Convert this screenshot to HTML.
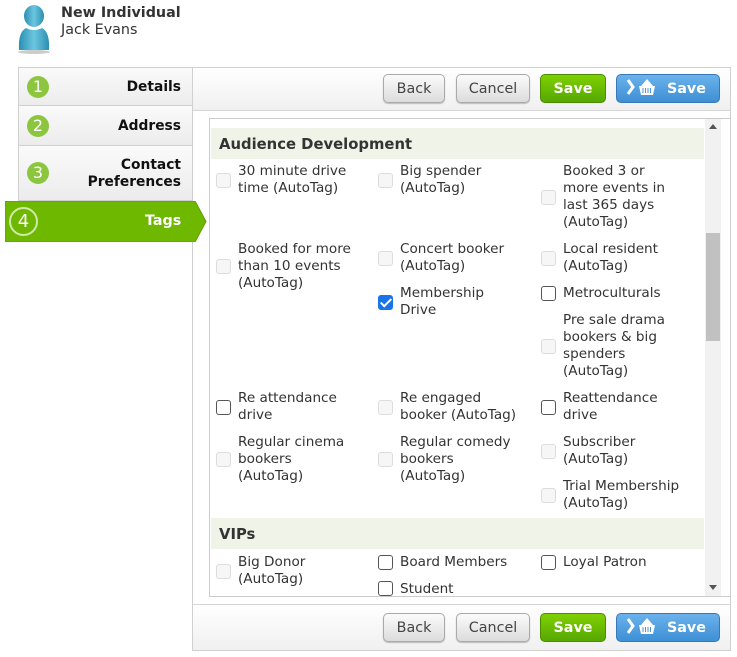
<!DOCTYPE html>
<html><head><meta charset="utf-8"><style>
*{box-sizing:border-box;margin:0;padding:0}
body{width:737px;height:657px;background:#fff;font-family:"DejaVu Sans",Verdana,sans-serif;font-size:13px;color:#333;position:relative;overflow:hidden}
.abs{position:absolute}
.nav{position:absolute;left:18px;width:175px;background:linear-gradient(#fafafa,#ececec);border:1px solid #d0d0d0;border-top:none;font-weight:bold;color:#111;font-size:13.8px;text-align:right;padding-right:11px;padding-top:2px;display:flex;align-items:center;justify-content:flex-end;line-height:17px}
.circ{position:absolute;left:8px;width:22px;height:22px;border-radius:50%;background:#8cc63f;color:#fff;font-weight:normal;font-size:16px;text-align:center;line-height:22px}
.btn{position:absolute;height:29px;border-radius:5px;font-size:14.3px;text-align:center;line-height:28px}
.g{background:linear-gradient(#fbfbfb,#dcdcdc);border:1px solid #aaa;color:#444;box-shadow:0 1px 1px #bbb}
.gr{background:linear-gradient(#7fd000,#56a800);border:1px solid #4a8d00;color:#fff;font-weight:bold}
.bl{background:linear-gradient(#6ab2ec,#3e8fd5);border:1px solid #3779b8;color:#fff;font-weight:bold}
.it{position:absolute;display:flex;align-items:center;line-height:17px;font-size:13.6px;color:#333}
.cb{width:15px;height:15px;border:1px solid #555;border-radius:3px;margin-right:7px;flex:none;background:#fff}
.cb.d{border-color:#ddd;background:#f6f6f6}
.cb.c{background:#1a73e8;border-color:#1a73e8;position:relative}
.cb.c:after{content:"";position:absolute;left:4px;top:0px;width:4px;height:9px;border:solid #fff;border-width:0 2px 2px 0;transform:rotate(45deg)}
.hd{position:absolute;left:211px;width:493px;height:31px;background:#f0f3e8;font-weight:bold;font-size:14.8px;color:#333;padding-left:8px;line-height:33px}
</style></head><body>
<svg class="abs" style="left:16px;top:4px" width="36" height="50" viewBox="0 0 36 50"><defs><linearGradient id="p" x1="0" x2="1"><stop offset="0" stop-color="#2a8fb0"/><stop offset=".5" stop-color="#6cc6e0"/><stop offset="1" stop-color="#2a8fb0"/></linearGradient></defs><ellipse cx="18" cy="48" rx="16" ry="2" fill="#ccc"/><ellipse cx="18" cy="12" rx="10" ry="11" fill="url(#p)"/><path d="M3 46 Q2 28 10 24 Q18 28 26 24 Q34 28 33 46 Z" fill="url(#p)"/></svg>
<div class="abs" style="left:61px;top:5px;font-weight:bold;font-size:14.3px;color:#333">New Individual</div>
<div class="abs" style="left:61px;top:22px;font-size:14.3px;color:#333">Jack Evans</div>

<div class="abs" style="left:192px;top:67px;width:539px;height:584px;border:1px solid #d0d0d0;background:#fff"></div>
<div class="abs" style="left:193px;top:68px;width:537px;height:43px;background:linear-gradient(#fff,#f0f0f0);border-bottom:1px solid #d6d6d6"></div>
<div class="abs" style="left:193px;top:604px;width:537px;height:46px;background:linear-gradient(#fff,#f0f0f0);border-top:1px solid #d6d6d6"></div>

<div class="nav" style="top:67px;height:39px;border-top:1px solid #d0d0d0"><div class="circ" style="top:8px">1</div>Details</div>
<div class="nav" style="top:106px;height:40px"><div class="circ" style="top:9px">2</div>Address</div>
<div class="nav" style="top:146px;height:55px"><div class="circ" style="top:16px">3</div>Contact<br>Preferences</div>
<svg class="abs" style="left:5px;top:201px" width="202" height="41"><path d="M0 0H190L201 20.5L190 41H0Z" fill="#6fb800" stroke="#5d9c00"/></svg>
<div class="abs" style="left:9px;top:207px;width:29px;height:29px;border-radius:50%;border:2px solid #cfe9a6;color:#fff;font-size:18px;text-align:center;line-height:25px">4</div>
<div class="abs" style="left:145px;top:213px;color:#fff;font-weight:bold;font-size:14.3px">Tags</div>

<div class="btn g" style="left:383px;top:74px;width:62px">Back</div>
<div class="btn g" style="left:456px;top:74px;width:74px">Cancel</div>
<div class="btn gr" style="left:540px;top:74px;width:66px">Save</div>
<div class="btn bl" style="left:616px;top:74px;width:104px;text-align:left;padding-left:9px"><svg width="36" height="20" style="vertical-align:-4px" viewBox="0 0 36 20"><path d="M2 3L7 10L2 17" fill="none" stroke="#fff" stroke-width="3"/><path d="M15 9L21 2L27 9Z" fill="#fff"/><path d="M13 9H29L27 18H15Z" fill="#fff"/><path d="M17 11V16M19.5 11V16M22 11V16M24.5 11V16" stroke="#4a96d8" stroke-width="1"/></svg> Save</div>
<div class="btn g" style="left:383px;top:613px;width:62px">Back</div>
<div class="btn g" style="left:456px;top:613px;width:74px">Cancel</div>
<div class="btn gr" style="left:540px;top:613px;width:66px">Save</div>
<div class="btn bl" style="left:616px;top:613px;width:104px;text-align:left;padding-left:9px"><svg width="36" height="20" style="vertical-align:-4px" viewBox="0 0 36 20"><path d="M2 3L7 10L2 17" fill="none" stroke="#fff" stroke-width="3"/><path d="M15 9L21 2L27 9Z" fill="#fff"/><path d="M13 9H29L27 18H15Z" fill="#fff"/><path d="M17 11V16M19.5 11V16M22 11V16M24.5 11V16" stroke="#4a96d8" stroke-width="1"/></svg> Save</div>

<div class="abs" style="left:209px;top:118px;width:522px;height:479px;border:1px solid #ccc;border-right:none"></div>
<div class="abs" style="left:705px;top:119px;width:16px;height:477px;background:#f1f1f1"></div>
<div class="abs" style="left:706px;top:233px;width:14px;height:108px;background:#c1c1c1"></div>
<div class="abs" style="left:709px;top:124px;width:0;height:0;border:4px solid transparent;border-bottom:5px solid #555;border-top:none"></div>
<div class="abs" style="left:709px;top:585px;width:0;height:0;border:4px solid transparent;border-top:5px solid #555;border-bottom:none"></div>

<div class="hd" style="top:128px">Audience Development</div>
<div class="hd" style="top:518px">VIPs</div>

<div class="it" style="left:216px;top:163px"><span class="cb d"></span>30 minute drive<br>time (AutoTag)</div>
<div class="it" style="left:378px;top:163px"><span class="cb d"></span>Big spender<br>(AutoTag)</div>
<div class="it" style="left:541px;top:163px"><span class="cb d"></span>Booked 3 or<br>more events in<br>last 365 days<br>(AutoTag)</div>
<div class="it" style="left:216px;top:241px"><span class="cb d"></span>Booked for more<br>than 10 events<br>(AutoTag)</div>
<div class="it" style="left:378px;top:241px"><span class="cb d"></span>Concert booker<br>(AutoTag)</div>
<div class="it" style="left:541px;top:241px"><span class="cb d"></span>Local resident<br>(AutoTag)</div>
<div class="it" style="left:378px;top:285px"><span class="cb c"></span>Membership<br>Drive</div>
<div class="it" style="left:541px;top:285px"><span class="cb"></span>Metroculturals</div>
<div class="it" style="left:541px;top:312px"><span class="cb d"></span>Pre sale drama<br>bookers &amp; big<br>spenders<br>(AutoTag)</div>
<div class="it" style="left:216px;top:390px"><span class="cb"></span>Re attendance<br>drive</div>
<div class="it" style="left:378px;top:390px"><span class="cb d"></span>Re engaged<br>booker (AutoTag)</div>
<div class="it" style="left:541px;top:390px"><span class="cb"></span>Reattendance<br>drive</div>
<div class="it" style="left:216px;top:434px"><span class="cb d"></span>Regular cinema<br>bookers<br>(AutoTag)</div>
<div class="it" style="left:378px;top:434px"><span class="cb d"></span>Regular comedy<br>bookers<br>(AutoTag)</div>
<div class="it" style="left:541px;top:434px"><span class="cb d"></span>Subscriber<br>(AutoTag)</div>
<div class="it" style="left:541px;top:478px"><span class="cb d"></span>Trial Membership<br>(AutoTag)</div>
<div class="it" style="left:216px;top:554px"><span class="cb d"></span>Big Donor<br>(AutoTag)</div>
<div class="it" style="left:378px;top:554px"><span class="cb"></span>Board Members</div>
<div class="it" style="left:541px;top:554px"><span class="cb"></span>Loyal Patron</div>
<div class="it" style="left:378px;top:581px;height:15px;overflow:hidden;align-items:flex-start"><span class="cb"></span>Student</div>
</body></html>
